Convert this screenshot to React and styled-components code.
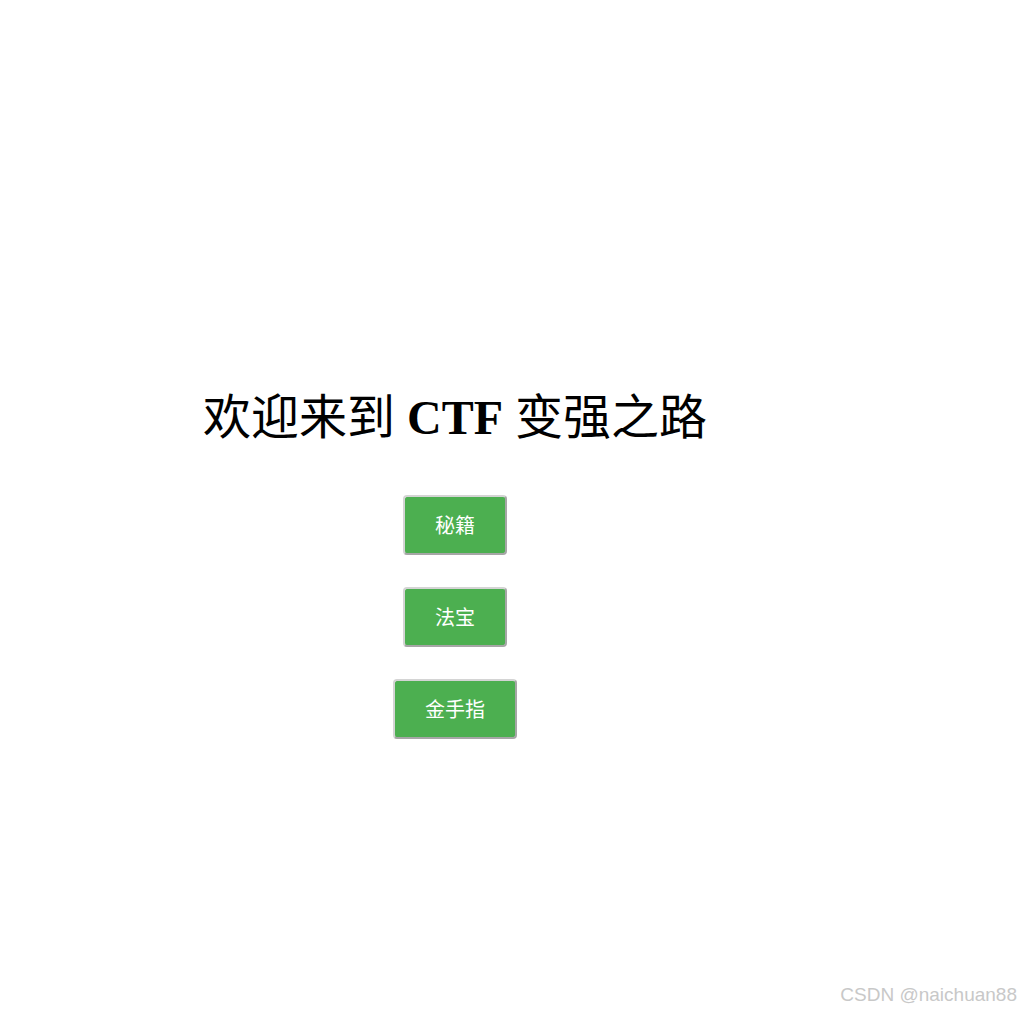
import React from "react";
import styled, { createGlobalStyle } from "styled-components";

const Global = createGlobalStyle`
  html, body { margin: 0; padding: 0; background: #ffffff; }
  body { width: 1020px; height: 1012px; overflow: hidden; position: relative; }
`;

const Page = styled.div`
  width: 910px;
  display: flex;
  flex-direction: column;
  align-items: center;
  padding-top: 388px;
`;

const Title = styled.h1`
  margin: 0 0 47px;
  font-family: "Liberation Serif", "Noto Sans CJK SC", serif;
  font-size: 48px;
  line-height: 60px;
  font-weight: 400;
  color: #000;
  strong { font-weight: 700; }
`;

const Buttons = styled.div`
  display: flex;
  flex-direction: column;
  align-items: center;
  gap: 32px;
`;

const Button = styled.button`
  background: #4caf50;
  color: #fff;
  font-family: "Noto Sans CJK SC", "Microsoft YaHei", sans-serif;
  font-size: 20px;
  line-height: 28px;
  padding: 14px 30px;
  border: 2px solid #d4d4d4;
  border-right-color: #a6a6a6;
  border-bottom-color: #a6a6a6;
  border-radius: 4px;
  cursor: pointer;
`;

const Watermark = styled.div`
  position: absolute;
  right: 3px;
  bottom: 6px;
  font-family: "Liberation Sans", Arial, sans-serif;
  font-size: 19px;
  color: #c8c8c8;
`;

export default function App() {
  return (
    <>
      <Global />
      <Page>
        <Title>
          欢迎来到 <strong>CTF</strong> 变强之路
        </Title>
        <Buttons>
          <Button>秘籍</Button>
          <Button>法宝</Button>
          <Button>金手指</Button>
        </Buttons>
      </Page>
      <Watermark>CSDN @naichuan88</Watermark>
    </>
  );
}
